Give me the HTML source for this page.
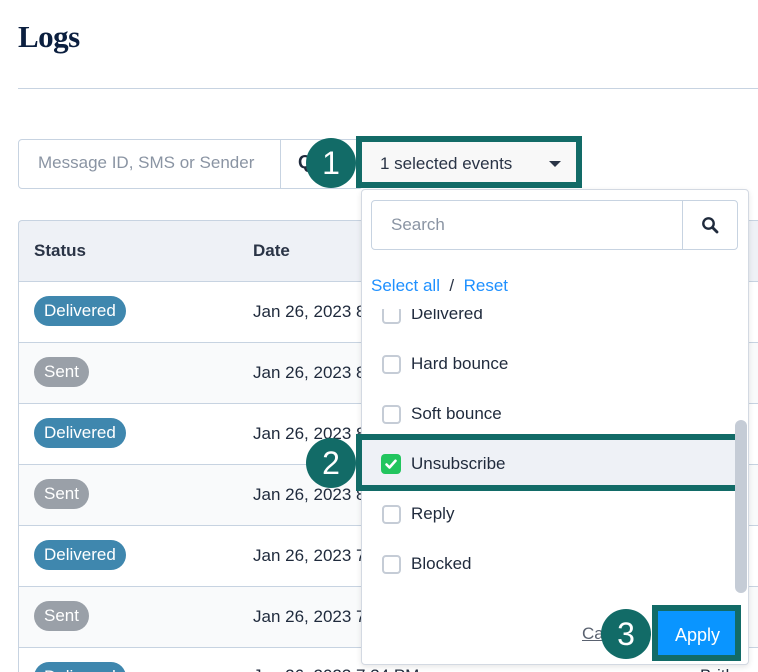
<!DOCTYPE html>
<html><head><style>
*{box-sizing:border-box;margin:0;padding:0}
html,body{width:758px;height:672px;overflow:hidden}
body{background:#fff;font-family:"Liberation Sans",Arial,sans-serif;color:#1f2a3c}
#wrap{position:relative;width:758px;height:672px;overflow:hidden}
.abs{position:absolute}
h1{position:absolute;left:18px;top:19px;font-family:"Liberation Serif",serif;font-weight:bold;font-size:31px;color:#0b1f3f;letter-spacing:-0.5px}
.rule{left:18px;top:88px;width:740px;height:1px;background:#c7d3e1}
.badge{position:absolute;left:34px;height:30px;border-radius:15px;color:#fff;font-size:17px;line-height:30px;padding:0 10px}
.del{background:#3f87ae}
.sent{background:#9aa0a8}
.date{position:absolute;left:253px;font-size:17px;color:#1f2a3c}
.row{position:absolute;left:18px;width:740px;height:61px;border-top:1px solid #c7d3e1;border-left:1px solid #c7d3e1}
.item{position:absolute;left:381px;font-size:17px;color:#1f2a3c}
.cb{position:absolute;left:382px;width:19px;height:19px;border:2px solid #c5ccd6;border-radius:4px;background:#fff}
.circ{position:absolute;width:50px;height:50px;border-radius:25px;background:#126b67;color:#fff;font-size:32px;text-align:center;line-height:50px}
</style></head><body><div id="wrap">
<h1>Logs</h1>
<div class="abs rule"></div>

<div class="abs" style="left:18px;top:139px;width:345px;height:50px;border:1px solid #c7d3e1;border-radius:4px"></div>
<div class="abs" style="left:280px;top:139px;width:1px;height:50px;background:#c7d3e1"></div>
<div class="abs" style="left:38px;top:153px;font-size:17px;color:#8a94a3">Message ID, SMS or Sender</div>
<div class="abs" style="left:298px;top:152px;font-size:18px;font-weight:bold;color:#1f2a3c">Q</div>

<div class="row" style="top:220px;height:61px;background:#eef1f6;border-radius:4px 0 0 0"></div>
<div class="abs" style="left:34px;top:241px;font-size:17px;font-weight:bold;color:#2a3446">Status</div>
<div class="abs" style="left:253px;top:241px;font-size:17px;font-weight:bold;color:#2a3446">Date</div>

<div class="row" style="top:281px"></div>
<div class="row" style="top:342px;background:#f9fafb"></div>
<div class="row" style="top:403px"></div>
<div class="row" style="top:464px;background:#f9fafb"></div>
<div class="row" style="top:525px"></div>
<div class="row" style="top:586px;background:#f9fafb"></div>
<div class="row" style="top:647px;height:25px"></div>

<div class="badge del" style="top:296px">Delivered</div><div class="date" style="top:302px">Jan 26, 2023 8</div>
<div class="badge sent" style="top:357px">Sent</div><div class="date" style="top:363px">Jan 26, 2023 8</div>
<div class="badge del" style="top:418px">Delivered</div><div class="date" style="top:424px">Jan 26, 2023 8</div>
<div class="badge sent" style="top:479px">Sent</div><div class="date" style="top:485px">Jan 26, 2023 8</div>
<div class="badge del" style="top:540px">Delivered</div><div class="date" style="top:546px">Jan 26, 2023 7</div>
<div class="badge sent" style="top:601px">Sent</div><div class="date" style="top:607px">Jan 26, 2023 7</div>
<div class="abs" style="left:0;top:660px;width:758px;height:12px;overflow:hidden">
 <div class="badge del" style="top:2px">Delivered</div><div class="date" style="top:6px">Jan 26, 2023 7:34 PM</div>
 <div class="abs" style="left:700px;top:6px;font-size:17px">Brith</div>
</div>

<div class="abs" style="left:356px;top:136px;width:226px;height:52px;border:6px solid #126b67;background:#f8f8f8"></div>
<div class="abs" style="left:380px;top:154px;font-size:17px;color:#2a3446">1 selected events</div>
<div class="abs" style="left:549px;top:161px;width:0;height:0;border-left:6px solid transparent;border-right:6px solid transparent;border-top:6px solid #2a3446"></div>

<div class="abs" style="left:361px;top:189px;width:388px;height:476px;background:#fff;border:1px solid #d3d9e2;border-radius:4px;box-shadow:0 2px 6px rgba(0,0,0,.1)"></div>
<div class="abs" style="left:371px;top:200px;width:367px;height:50px;border:1px solid #c7d3e1;border-radius:4px"></div>
<div class="abs" style="left:682px;top:200px;width:1px;height:50px;background:#c7d3e1"></div>
<div class="abs" style="left:391px;top:215px;font-size:17px;color:#8a94a3">Search</div>
<svg class="abs" style="left:701px;top:216px" width="18" height="18" viewBox="0 0 18 18"><circle cx="7.5" cy="7.5" r="5.2" fill="none" stroke="#1f2a3c" stroke-width="2.4"/><line x1="11.5" y1="11.5" x2="16" y2="16" stroke="#1f2a3c" stroke-width="2.8" stroke-linecap="round"/></svg>
<div class="abs" style="left:371px;top:276px;font-size:17px;color:#1e90ff">Select all <span style="color:#2a3446">&nbsp;/&nbsp;</span> Reset</div>

<div class="cb" style="top:306px;height:18px"></div><div class="item" style="left:411px;top:304px">Delivered</div>
<div class="abs" style="left:362px;top:297px;width:372px;height:12px;background:#fff"></div>
<div class="cb" style="top:355px"></div><div class="item" style="left:411px;top:354px">Hard bounce</div>
<div class="cb" style="top:405px"></div><div class="item" style="left:411px;top:404px">Soft bounce</div>

<div class="abs" style="left:356px;top:434px;width:385px;height:57px;border:6px solid #126b67;background:#eef1f6"></div>
<div class="abs" style="left:381px;top:454px;width:20px;height:20px;border-radius:4px;background:#22c55e"></div>
<svg class="abs" style="left:384px;top:457px" width="14" height="14" viewBox="0 0 14 14"><path d="M2.5 7.5 L5.5 10.5 L11.5 3.8" fill="none" stroke="#fff" stroke-width="2.6" stroke-linecap="round" stroke-linejoin="round"/></svg>
<div class="item" style="left:411px;top:454px">Unsubscribe</div>
<div class="cb" style="top:505px"></div><div class="item" style="left:411px;top:504px">Reply</div>
<div class="cb" style="top:555px"></div><div class="item" style="left:411px;top:554px">Blocked</div>

<div class="abs" style="left:735px;top:420px;width:12px;height:173px;border-radius:6px;background:#c5ccd6"></div>

<div class="abs" style="left:582px;top:624px;font-size:17px;color:#5a6270;text-decoration:underline">Ca</div>
<div class="abs" style="left:652px;top:605px;width:89px;height:56px;border:6px solid #126b67;background:#0a95ff"></div>
<div class="abs" style="left:675px;top:625px;font-size:18px;color:#fff">Apply</div>

<div class="circ" style="left:306px;top:138px">1</div>
<div class="circ" style="left:306px;top:438px">2</div>
<div class="circ" style="left:601px;top:609px">3</div>
</div></body></html>
